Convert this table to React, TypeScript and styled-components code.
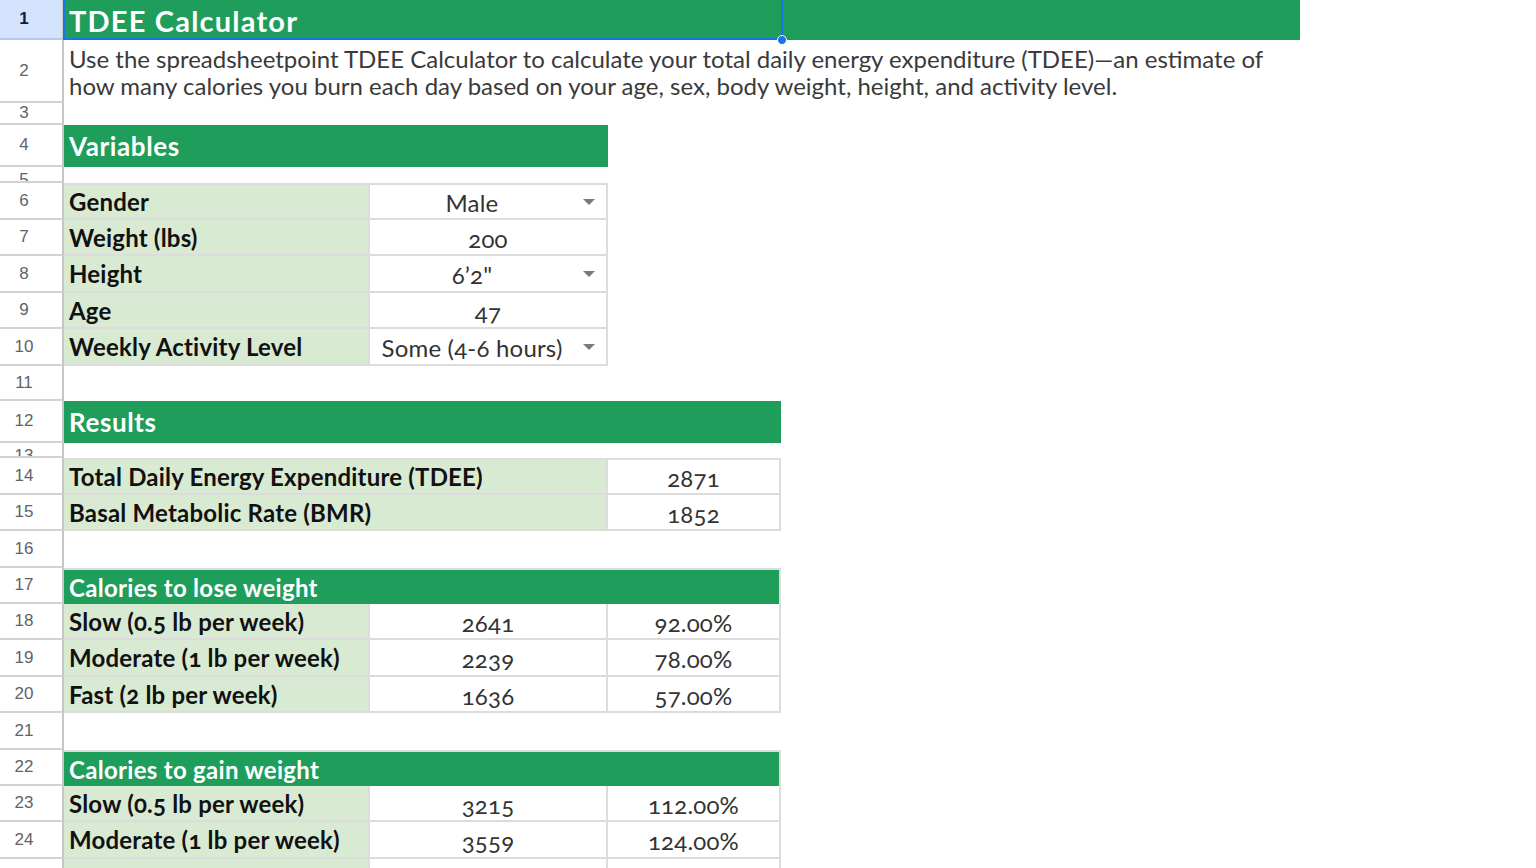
import React from 'react';
import styled, { createGlobalStyle, css } from 'styled-components';

const GREEN = '#1f9d5b';
const LIGHT = '#d9ead3';
const GRID = '#dcdcdc';

const GlobalStyle = createGlobalStyle`
  html, body { margin: 0; padding: 0; background: #ffffff; }
  body { font-family: Lato, "Liberation Sans", sans-serif; overflow: hidden; }
`;

const Sheet = styled.div`
  position: relative;
  display: flex;
  flex-direction: column;
  width: 1536px;
  height: 868px;
  overflow: hidden;
  font-variant-numeric: oldstyle-nums;
`;

const Row = styled.div<{ $h: number }>`
  display: flex;
  flex: none;
  height: ${(p) => p.$h}px;
`;

const RowHeader = styled.div<{ $active?: boolean; $clip?: boolean }>`
  width: 64px;
  flex: none;
  box-sizing: border-box;
  border-right: 2px solid #c6c6c6;
  border-bottom: 2px solid #d2d2d2;
  display: flex;
  align-items: center;
  justify-content: center;
  padding-right: 14px;
  overflow: hidden;
  font-family: "Liberation Sans", Arial, sans-serif;
  font-variant-numeric: normal;
  font-size: 17px;
  color: #5f6368;
  ${(p) =>
    p.$active &&
    css`
      background: #d3e3fd;
      color: #0a1c40;
      font-weight: 700;
      border-bottom-color: #b7c9ea;
    `}
  ${(p) =>
    p.$clip &&
    css`
      align-items: flex-start;
      padding-top: 3px;
    `}
`;

type Kind = 'title' | 'section' | 'sub' | 'label' | 'value' | 'text';

const Cell = styled.div<{ $w: number; $kind: Kind; $top?: boolean; $drop?: boolean }>`
  position: relative;
  flex: none;
  width: ${(p) => p.$w}px;
  box-sizing: border-box;
  display: flex;
  align-items: center;
  overflow: hidden;
  white-space: nowrap;
  ${(p) =>
    p.$kind === 'title' &&
    css`
      background: ${GREEN};
      color: #ffffff;
      font-weight: 700;
      font-size: 29px;
      letter-spacing: 1.2px;
      padding-left: 5px;
    `}
  ${(p) =>
    p.$kind === 'section' &&
    css`
      background: ${GREEN};
      color: #ffffff;
      font-weight: 700;
      font-size: 26px;
      letter-spacing: 0.6px;
      padding-left: 5px;
    `}
  ${(p) =>
    p.$kind === 'sub' &&
    css`
      background: ${GREEN};
      color: #ffffff;
      font-weight: 700;
      font-size: 24px;
      letter-spacing: 0.3px;
      padding-left: 5px;
      border-top: 2px solid ${GRID};
      border-right: 2px solid ${GRID};
    `}
  ${(p) =>
    p.$kind === 'label' &&
    css`
      background: ${LIGHT};
      color: #111111;
      font-weight: 700;
      font-size: 24px;
      letter-spacing: 0.2px;
      padding-left: 5px;
      border-right: 2px solid ${GRID};
      border-bottom: 2px solid ${GRID};
    `}
  ${(p) =>
    p.$kind === 'value' &&
    css`
      background: #ffffff;
      color: #333333;
      font-size: 24px;
      letter-spacing: 0.2px;
      justify-content: center;
      border-right: 2px solid ${GRID};
      border-bottom: 2px solid ${GRID};
      padding-top: 2px;
    `}
  ${(p) =>
    p.$kind === 'text' &&
    css`
      color: #3a3a3a;
      font-size: 24px;
      line-height: 27px;
      padding-left: 5px;
    `}
  ${(p) =>
    p.$top &&
    css`
      border-top: 2px solid ${GRID};
    `}
  ${(p) =>
    p.$drop &&
    css`
      padding-right: 32px;
    `}
`;

const DropArrow = styled.span`
  position: absolute;
  right: 11px;
  top: 50%;
  margin-top: -3px;
  width: 0;
  height: 0;
  border-left: 6px solid transparent;
  border-right: 6px solid transparent;
  border-top: 6px solid #7a7a7a;
`;

const Selection = styled.div`
  position: absolute;
  left: 63px;
  top: -2px;
  width: 720px;
  height: 42px;
  box-sizing: border-box;
  border: 2px solid #1a73e8;
  pointer-events: none;
`;

const Handle = styled.div`
  position: absolute;
  left: 777px;
  top: 35px;
  width: 10px;
  height: 10px;
  box-sizing: border-box;
  border-radius: 50%;
  background: #1a73e8;
  border: 1px solid #ffffff;
`;

const A = 306;
const B = 238;
const C = 173;

type Pair = { label: string; value: string; drop?: boolean };
const variables: Pair[] = [
  { label: 'Gender', value: 'Male', drop: true },
  { label: 'Weight (lbs)', value: '200' },
  { label: 'Height', value: '6\u20192"', drop: true },
  { label: 'Age', value: '47' },
  { label: 'Weekly Activity Level', value: 'Some (4-6 hours)', drop: true },
];

type Triple = { label: string; cal: string; pct: string };
const lose: Triple[] = [
  { label: 'Slow (0.5 lb per week)', cal: '2641', pct: '92.00%' },
  { label: 'Moderate (1 lb per week)', cal: '2239', pct: '78.00%' },
  { label: 'Fast (2 lb per week)', cal: '1636', pct: '57.00%' },
];
const gain: Triple[] = [
  { label: 'Slow (0.5 lb per week)', cal: '3215', pct: '112.00%' },
  { label: 'Moderate (1 lb per week)', cal: '3559', pct: '124.00%' },
];

const varHeights = [37, 36, 37, 36, 37];
const loseHeights = [36, 37, 36];
const gainHeights = [36, 37];

export default function App() {
  return (
    <>
      <GlobalStyle />
      <Sheet>
        <Row $h={40}>
          <RowHeader $active>1</RowHeader>
          <Cell $w={1236} $kind="title">TDEE Calculator</Cell>
        </Row>
        <Row $h={63}>
          <RowHeader>2</RowHeader>
          <Cell $w={1236} $kind="text">
            Use the spreadsheetpoint TDEE Calculator to calculate your total daily energy expenditure (TDEE)—an estimate of
            <br />
            how many calories you burn each day based on your age, sex, body weight, height, and activity level.
          </Cell>
        </Row>
        <Row $h={22}>
          <RowHeader>3</RowHeader>
        </Row>
        <Row $h={42}>
          <RowHeader>4</RowHeader>
          <Cell $w={A + B} $kind="section">Variables</Cell>
        </Row>
        <Row $h={16}>
          <RowHeader $clip>5</RowHeader>
        </Row>
        {variables.map((v, i) => (
          <Row $h={varHeights[i]} key={v.label}>
            <RowHeader>{6 + i}</RowHeader>
            <Cell $w={A} $kind="label" $top={i === 0}>{v.label}</Cell>
            <Cell $w={B} $kind="value" $top={i === 0} $drop={v.drop}>
              {v.value}
              {v.drop && <DropArrow />}
            </Cell>
          </Row>
        ))}
        <Row $h={35}>
          <RowHeader>11</RowHeader>
        </Row>
        <Row $h={42}>
          <RowHeader>12</RowHeader>
          <Cell $w={A + B + C} $kind="section">Results</Cell>
        </Row>
        <Row $h={15}>
          <RowHeader $clip>13</RowHeader>
        </Row>
        <Row $h={37}>
          <RowHeader>14</RowHeader>
          <Cell $w={A + B} $kind="label" $top>Total Daily Energy Expenditure (TDEE)</Cell>
          <Cell $w={C} $kind="value" $top>2871</Cell>
        </Row>
        <Row $h={36}>
          <RowHeader>15</RowHeader>
          <Cell $w={A + B} $kind="label">Basal Metabolic Rate (BMR)</Cell>
          <Cell $w={C} $kind="value">1852</Cell>
        </Row>
        <Row $h={37}>
          <RowHeader>16</RowHeader>
        </Row>
        <Row $h={36}>
          <RowHeader>17</RowHeader>
          <Cell $w={A + B + C} $kind="sub">Calories to lose weight</Cell>
        </Row>
        {lose.map((r, i) => (
          <Row $h={loseHeights[i]} key={'l' + i}>
            <RowHeader>{18 + i}</RowHeader>
            <Cell $w={A} $kind="label">{r.label}</Cell>
            <Cell $w={B} $kind="value">{r.cal}</Cell>
            <Cell $w={C} $kind="value">{r.pct}</Cell>
          </Row>
        ))}
        <Row $h={37}>
          <RowHeader>21</RowHeader>
        </Row>
        <Row $h={36}>
          <RowHeader>22</RowHeader>
          <Cell $w={A + B + C} $kind="sub">Calories to gain weight</Cell>
        </Row>
        {gain.map((r, i) => (
          <Row $h={gainHeights[i]} key={'g' + i}>
            <RowHeader>{23 + i}</RowHeader>
            <Cell $w={A} $kind="label">{r.label}</Cell>
            <Cell $w={B} $kind="value">{r.cal}</Cell>
            <Cell $w={C} $kind="value">{r.pct}</Cell>
          </Row>
        ))}
        <Row $h={36}>
          <RowHeader />
          <Cell $w={A} $kind="label" />
          <Cell $w={B} $kind="value" />
          <Cell $w={C} $kind="value" />
        </Row>
        <Selection />
        <Handle />
      </Sheet>
    </>
  );
}
